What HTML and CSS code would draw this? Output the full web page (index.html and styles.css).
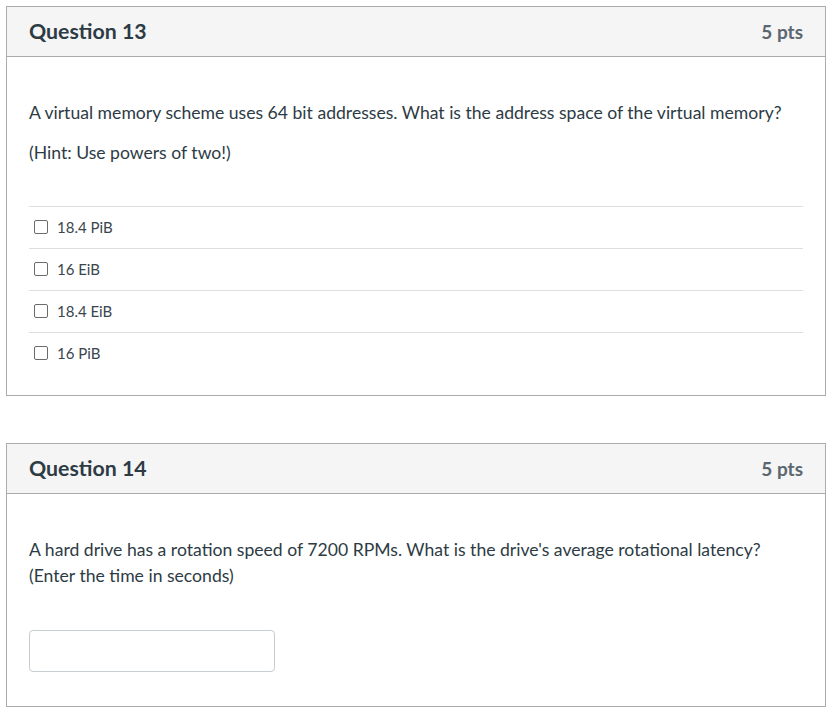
FILE: index.html
```html
<!DOCTYPE html>
<html>
<head>
<meta charset="utf-8">
<link rel="stylesheet" href="styles.css">
</head>
<body>
<div class="page">
  <div class="card">
    <div class="card-head">
      <h2 class="q-title">Question 13</h2>
      <span class="q-pts">5 pts</span>
    </div>
    <div class="card-body q13">
      <p class="q-text">A virtual memory scheme uses 64 bit addresses. What is the address space of the virtual memory?</p>
      <p class="q-text">(Hint: Use powers of two!)</p>
      <div class="answers">
        <label class="answer"><span class="box"></span><span class="ans-text">18.4 PiB</span></label>
        <label class="answer"><span class="box"></span><span class="ans-text">16 EiB</span></label>
        <label class="answer"><span class="box"></span><span class="ans-text">18.4 EiB</span></label>
        <label class="answer"><span class="box"></span><span class="ans-text">16 PiB</span></label>
      </div>
    </div>
  </div>
  <div class="card">
    <div class="card-head">
      <h2 class="q-title">Question 14</h2>
      <span class="q-pts">5 pts</span>
    </div>
    <div class="card-body q14">
      <p class="q-text tight">A hard drive has a rotation speed of 7200 RPMs. What is the drive's average rotational latency?<br>(Enter the time in seconds)</p>
      <div class="input-box"></div>
    </div>
  </div>
</div>
</body>
</html>
```
FILE: styles.css
```css
html, body {
  margin: 0;
  padding: 0;
  background: #ffffff;
}
body {
  font-family: Lato, "Open Sans", "Liberation Sans", sans-serif;
  color: #2d3b45;
}
.page {
  padding: 6px 4px 0 6px;
  display: flex;
  flex-direction: column;
  gap: 47px;
}
.card {
  border: 1px solid #ababab;
  background: #fff;
}
.card-head {
  height: 48px;
  padding: 0 22px 1px 22px;
  background: #f5f5f5;
  border-bottom: 1px solid #ababab;
  display: flex;
  align-items: center;
  justify-content: space-between;
}
.q-title {
  margin: 0;
  font-size: 21.3px;
  font-weight: 700;
  color: #2d3b45;
}
.q-pts {
  font-size: 19px;
  font-weight: 700;
  color: #5b6770;
}
.card-body {
  padding: 0 22px;
}
.q13 {
  padding-top: 44px;
  padding-bottom: 21px;
}
.q-text {
  margin: 0 0 16px 0;
  font-size: 17.6px;
  line-height: 24px;
  color: #2d3b45;
}
.answers {
  margin-top: 41px;
}
.answer {
  display: flex;
  align-items: center;
  height: 39px;
  padding: 0 0 2px 5px;
  border-top: 1px solid #dcdfe1;
}
.box {
  width: 12px;
  height: 12px;
  border: 1px solid #6b6b6b;
  border-radius: 2px;
  margin-right: 9px;
  margin-top: 1px;
  background: #fff;
}
.ans-text {
  font-size: 15px;
  color: #3a454d;
}
.q14 {
  padding-top: 43px;
  padding-bottom: 34px;
}
.q-text.tight {
  line-height: 26px;
  margin: 0;
}
.input-box {
  margin-top: 41px;
  width: 244px;
  height: 40px;
  border: 1px solid #c7cdd1;
  border-radius: 4px;
  background: #fff;
}
```
